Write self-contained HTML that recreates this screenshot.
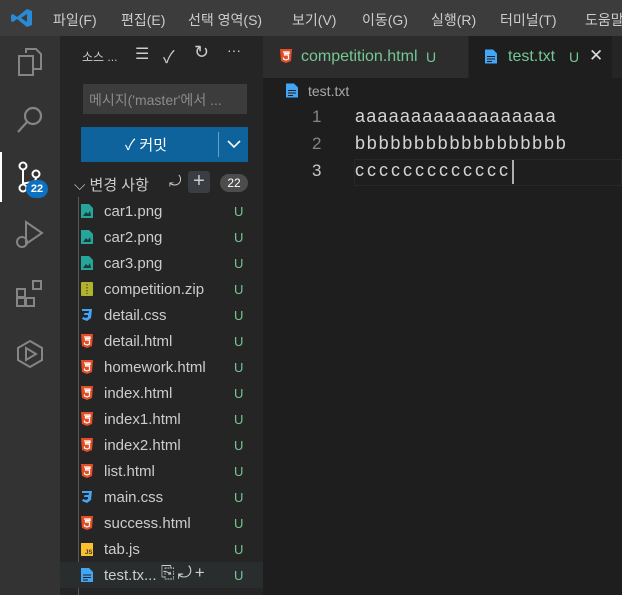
<!DOCTYPE html>
<html><head><meta charset="utf-8"><style>
*{margin:0;padding:0;box-sizing:border-box}
body{width:622px;height:595px;overflow:hidden;background:#1e1e1e;font-family:"Liberation Sans","Noto Sans CJK KR",sans-serif;color:#ccc;position:relative}
.abs{position:absolute}
#menu{left:0;top:0;width:622px;height:36px;background:#3c3c3c;font-size:14px;color:#ccc;overflow:hidden}
#menu span{position:absolute;top:10px;white-space:nowrap}
#act{left:0;top:36px;width:60px;height:559px;background:#333}
#side{left:60px;top:36px;width:203px;height:559px;background:#252526}
#tabs{left:263px;top:36px;width:359px;height:42px;background:#252526}
.row{position:absolute;left:0;width:203px;height:26px;font-size:15px;color:#ccc}
.row .n{position:absolute;left:44px;top:5px;white-space:nowrap}
.row .u{position:absolute;left:174px;top:6px;color:#73c991;font-size:13px}
.row .i{position:absolute;left:21px;top:6px;width:12px;height:14px}
.ln{position:absolute;left:312px;font-size:17px;color:#858585;font-family:"Liberation Sans",sans-serif}
.code{position:absolute;left:355px;font-size:18px;color:#d4d4d4;white-space:nowrap}
</style></head><body>
<div id="menu" class="abs">
<svg class="abs" style="left:11px;top:8px" width="22" height="20" viewBox="0 0 22 20"><path d="M16 1 L21 3 V17 L16 19 L6 11 L2 14 L0 13 V7 L2 6 L6 9 Z M16 6 L10 10 L16 14 Z" fill="#2a8ad6"/></svg>
<span style="left:53px">파일(F)</span><span style="left:121px">편집(E)</span><span style="left:188px">선택 영역(S)</span><span style="left:292px">보기(V)</span><span style="left:362px">이동(G)</span><span style="left:431px">실행(R)</span><span style="left:500px">터미널(T)</span><span style="left:585px">도움말</span>
</div>
<div id="act" class="abs">
<svg class="abs" style="left:16px;top:11px" width="28" height="30" viewBox="0 0 28 30" fill="none" stroke="#858585" stroke-width="2"><path d="M10 6 V2 H20 L25 7 V22 H17"/><rect x="3" y="9" width="14" height="19"/></svg>
<svg class="abs" style="left:16px;top:69px" width="28" height="30" viewBox="0 0 28 30" fill="none" stroke="#858585" stroke-width="2.2"><circle cx="17" cy="11" r="8"/><path d="M11 17 L2 27"/></svg>
<div class="abs" style="left:0;top:116px;width:2px;height:50px;background:#fff"></div>
<svg class="abs" style="left:16px;top:124px" width="28" height="34" viewBox="0 0 28 34" fill="none" stroke="#fff" stroke-width="2"><circle cx="7" cy="6" r="3.5"/><circle cx="20" cy="14" r="3.5"/><circle cx="7" cy="28" r="3.5"/><path d="M7 10 V24 M20 18 C20 24 7 22 7 24"/></svg>
<div class="abs" style="left:26px;top:144px;width:22px;height:18px;border-radius:9px;background:#0e70c0;color:#fff;font-size:11px;font-weight:bold;text-align:center;line-height:18px">22</div>
<svg class="abs" style="left:14px;top:182px" width="32" height="34" viewBox="0 0 32 34" fill="none" stroke="#858585" stroke-width="2"><path d="M12 4 L28 15 L12 26 Z"/><circle cx="8" cy="24" r="5"/></svg>
<svg class="abs" style="left:15px;top:243px" width="30" height="30" viewBox="0 0 30 30" fill="none" stroke="#858585" stroke-width="2"><rect x="2" y="10" width="8" height="8"/><rect x="2" y="19" width="8" height="8"/><rect x="11" y="19" width="8" height="8"/><rect x="18" y="2" width="8" height="8"/></svg>
<svg class="abs" style="left:15px;top:303px" width="30" height="30" viewBox="0 0 30 30" fill="none" stroke="#858585" stroke-width="2"><path d="M15 2 L27 9 V21 L15 28 L3 21 V9 Z M11 9 L21 15 L11 21 Z"/></svg>
</div>
<div id="side" class="abs">
<div class="abs" style="left:22px;top:12px;font-size:12px;color:#ccc">소스 ...</div>
<div class="abs" style="left:75px;top:8px;font-size:16px;color:#ccc">☰</div>
<div class="abs" style="left:103px;top:7px;font-size:17px;color:#ccc">✓</div>
<div class="abs" style="left:134px;top:6px;font-size:18px;color:#ccc">↻</div>
<div class="abs" style="left:167px;top:6px;font-size:14px;color:#ccc">···</div>
<div class="abs" style="left:23px;top:48px;width:164px;height:30px;background:#3c3c3c;color:#8b8b8b;font-size:14px;padding:6px 6px;white-space:nowrap;overflow:hidden">메시지('master'에서 ...</div>
<div class="abs" style="left:21px;top:91px;width:167px;height:35px;background:#0e639c;color:#fff;font-size:15px">
<span class="abs" style="left:44px;top:7px">✓ 커밋</span>
<div class="abs" style="left:137px;top:5px;width:1px;height:25px;background:#6a9ec4"></div>
<svg class="abs" style="left:146px;top:13px" width="14" height="9" viewBox="0 0 14 9" fill="none" stroke="#fff" stroke-width="1.6"><path d="M1 1 L7 7 L13 1"/></svg>
</div>
<div class="abs" style="left:14px;top:138px;font-size:15px;color:#ccc">⌵ 변경 사항</div>
<div class="abs" style="left:109px;top:137px;font-size:15px;color:#ccc">⤾</div>
<div class="abs" style="left:128px;top:135px;width:22px;height:22px;background:#3a3d41;border-radius:3px;font-size:20px;text-align:center;line-height:21px;color:#ccc">+</div>
<div class="abs" style="left:160px;top:138px;width:28px;height:18px;background:#4d4d4d;border-radius:9px;font-size:12px;text-align:center;line-height:18px;color:#fff">22</div>
<div class="abs" style="left:18px;top:161px;width:1px;height:398px;background:#585858"></div>
<div class="abs" style="left:0;top:162px;width:203px">
<div class="row" style="top:0"><svg class="i" viewBox="0 0 12 14"><path d="M0 0H8L12 4V14H0Z" fill="#26a69a"/><path d="M2 12L5 8L7 10L9 7L10 12Z" fill="#1b3b38"/></svg><span class="n">car1.png</span><span class="u">U</span></div>
<div class="row" style="top:26px"><svg class="i" viewBox="0 0 12 14"><path d="M0 0H8L12 4V14H0Z" fill="#26a69a"/><path d="M2 12L5 8L7 10L9 7L10 12Z" fill="#1b3b38"/></svg><span class="n">car2.png</span><span class="u">U</span></div>
<div class="row" style="top:52px"><svg class="i" viewBox="0 0 12 14"><path d="M0 0H8L12 4V14H0Z" fill="#26a69a"/><path d="M2 12L5 8L7 10L9 7L10 12Z" fill="#1b3b38"/></svg><span class="n">car3.png</span><span class="u">U</span></div>
<div class="row" style="top:78px"><svg class="i" viewBox="0 0 12 14"><rect width="12" height="14" rx="1" fill="#afb42b"/><path d="M6 2V12" stroke="#333" stroke-dasharray="1.5 1.5"/></svg><span class="n">competition.zip</span><span class="u">U</span></div>
<div class="row" style="top:104px"><svg class="i" viewBox="0 0 12 14"><path d="M1 1H11L10 10L6 13L1 11L2 9L5 10L7 9L7 7H3L3.5 5H7.5L8 3H1Z" fill="#42a5f5"/></svg><span class="n">detail.css</span><span class="u">U</span></div>
<div class="row" style="top:130px"><svg class="i" viewBox="0 0 12 14"><path d="M0 0H12L11 12L6 14L1 12Z" fill="#e44d26"/><path d="M3 3H9V4.5H4.5V6H8.5V10L6 11L3.5 10V8.5" fill="none" stroke="#fff" stroke-width="1.2"/></svg><span class="n">detail.html</span><span class="u">U</span></div>
<div class="row" style="top:156px"><svg class="i" viewBox="0 0 12 14"><path d="M0 0H12L11 12L6 14L1 12Z" fill="#e44d26"/><path d="M3 3H9V4.5H4.5V6H8.5V10L6 11L3.5 10V8.5" fill="none" stroke="#fff" stroke-width="1.2"/></svg><span class="n">homework.html</span><span class="u">U</span></div>
<div class="row" style="top:182px"><svg class="i" viewBox="0 0 12 14"><path d="M0 0H12L11 12L6 14L1 12Z" fill="#e44d26"/><path d="M3 3H9V4.5H4.5V6H8.5V10L6 11L3.5 10V8.5" fill="none" stroke="#fff" stroke-width="1.2"/></svg><span class="n">index.html</span><span class="u">U</span></div>
<div class="row" style="top:208px"><svg class="i" viewBox="0 0 12 14"><path d="M0 0H12L11 12L6 14L1 12Z" fill="#e44d26"/><path d="M3 3H9V4.5H4.5V6H8.5V10L6 11L3.5 10V8.5" fill="none" stroke="#fff" stroke-width="1.2"/></svg><span class="n">index1.html</span><span class="u">U</span></div>
<div class="row" style="top:234px"><svg class="i" viewBox="0 0 12 14"><path d="M0 0H12L11 12L6 14L1 12Z" fill="#e44d26"/><path d="M3 3H9V4.5H4.5V6H8.5V10L6 11L3.5 10V8.5" fill="none" stroke="#fff" stroke-width="1.2"/></svg><span class="n">index2.html</span><span class="u">U</span></div>
<div class="row" style="top:260px"><svg class="i" viewBox="0 0 12 14"><path d="M0 0H12L11 12L6 14L1 12Z" fill="#e44d26"/><path d="M3 3H9V4.5H4.5V6H8.5V10L6 11L3.5 10V8.5" fill="none" stroke="#fff" stroke-width="1.2"/></svg><span class="n">list.html</span><span class="u">U</span></div>
<div class="row" style="top:286px"><svg class="i" viewBox="0 0 12 14"><path d="M1 1H11L10 10L6 13L1 11L2 9L5 10L7 9L7 7H3L3.5 5H7.5L8 3H1Z" fill="#42a5f5"/></svg><span class="n">main.css</span><span class="u">U</span></div>
<div class="row" style="top:312px"><svg class="i" viewBox="0 0 12 14"><path d="M0 0H12L11 12L6 14L1 12Z" fill="#e44d26"/><path d="M3 3H9V4.5H4.5V6H8.5V10L6 11L3.5 10V8.5" fill="none" stroke="#fff" stroke-width="1.2"/></svg><span class="n">success.html</span><span class="u">U</span></div>
<div class="row" style="top:338px"><svg class="i" viewBox="0 0 12 14"><rect width="13" height="13" y="1" fill="#fbc02d"/><text x="4" y="12" font-size="6" font-weight="bold" fill="#333" font-family="Liberation Sans">JS</text></svg><span class="n">tab.js</span><span class="u">U</span></div>
<div class="row" style="top:364px;background:#2a2d2e"><svg class="i" viewBox="0 0 12 14"><path d="M0 0H8L12 4V14H0Z" fill="#42a5f5"/><path d="M2 7H10M2 9.5H10M2 12H7" stroke="#1e1e1e"/></svg><span class="n">test.tx...</span><span class="abs" style="left:101px;top:1px;font-size:17px;letter-spacing:3px">⎘⤾+</span><span class="u">U</span></div>
</div>
</div>
<div id="tabs" class="abs">
<div class="abs" style="left:0;top:0;width:205px;height:42px;background:#2d2d2d"></div>
<svg class="abs" style="left:17px;top:13px" width="12" height="14" viewBox="0 0 12 14"><path d="M0 0H12L11 12L6 14L1 12Z" fill="#e44d26"/><path d="M3 3H9V4.5H4.5V6H8.5V10L6 11L3.5 10V8.5" fill="none" stroke="#fff" stroke-width="1.2"/></svg>
<div class="abs" style="left:38px;top:12px;font-size:16px;color:#73c991">competition.html</div>
<div class="abs" style="left:163px;top:13px;font-size:14px;color:#73c991">U</div>
<div class="abs" style="left:206px;top:0;width:143px;height:42px;background:#1e1e1e"></div>
<svg class="abs" style="left:222px;top:13px" width="12" height="15" viewBox="0 0 12 14"><path d="M0 0H8L12 4V14H0Z" fill="#42a5f5"/><path d="M2 7H10M2 9.5H10M2 12H7" stroke="#1e1e1e"/></svg>
<div class="abs" style="left:245px;top:12px;font-size:16px;color:#73c991">test.txt</div>
<div class="abs" style="left:306px;top:13px;font-size:14px;color:#73c991">U</div>
<div class="abs" style="left:326px;top:10px;font-size:17px;color:#ddd">✕</div>
</div>
<svg class="abs" style="left:286px;top:83px" width="12" height="15" viewBox="0 0 12 14"><path d="M0 0H8L12 4V14H0Z" fill="#42a5f5"/><path d="M2 7H10M2 9.5H10M2 12H7" stroke="#1e1e1e"/></svg>
<div class="abs" style="left:308px;top:83px;font-size:14px;color:#a9a9a9">test.txt</div>
<div class="ln" style="top:107px">1</div><div class="code" style="top:106px;letter-spacing:1.2px">aaaaaaaaaaaaaaaaaa</div>
<div class="ln" style="top:134px">2</div><div class="code" style="top:133px;letter-spacing:1.8px">bbbbbbbbbbbbbbbbbb</div>
<div class="abs" style="left:354px;top:159px;width:268px;height:27px;border:1px solid #282828"></div>
<div class="ln" style="top:161px;color:#c6c6c6">3</div><div class="code" style="top:160px;letter-spacing:3px">ccccccccccccc</div>
<div class="abs" style="left:512px;top:160px;width:2px;height:24px;background:#aeafad"></div>
</body></html>
